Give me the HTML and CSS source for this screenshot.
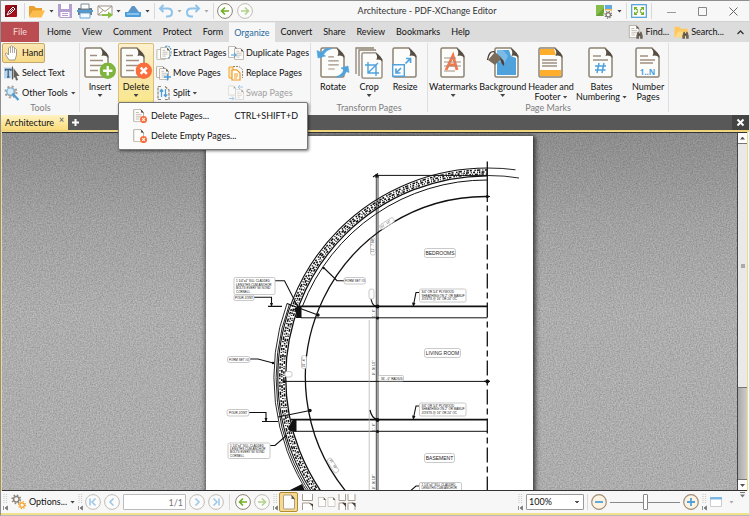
FILE: index.html
```html
<!DOCTYPE html>
<html lang="en">
<head>
<meta charset="utf-8">
<title>Architecture - PDF-XChange Editor</title>
<link rel="stylesheet" href="styles.css">
</head>
<body>
<svg class="defs" aria-hidden="true">
  <defs>
    <symbol id="page" viewBox="0 0 25 31">
      <path d="M2.500 1H17L24 9V28.500Q24 30 22.500 30H2.500Q1 30 1 28.500V2.500Q1 1 2.500 1Z" fill="#fcfcfb" stroke="#8d8272" stroke-width="1.500"/>
      <path d="M16.500 1Q19.500 5 17.500 9Q21 7.500 24.500 11Q24 5 16.500 1Z" fill="#574e43"/>
    </symbol>
    <symbol id="lines" viewBox="0 0 25 31">
      <path d="M6 8.500H13M6 13.500H19M6 18.500H19M6 23.500H14" stroke="#a08f80" stroke-width="1.400"/>
    </symbol>
    <symbol id="plus" viewBox="0 0 16 16">
      <circle cx="8" cy="8" r="8" fill="#7fb53c"/>
      <path d="M8 3.500V12.500M3.500 8H12.500" stroke="#fff" stroke-width="2.200"/>
    </symbol>
    <symbol id="cross" viewBox="0 0 16 16">
      <circle cx="8" cy="8" r="8" fill="#fb6e3c"/>
      <path d="M5 5L11 11M11 5L5 11" stroke="#fff" stroke-width="2.400"/>
    </symbol>
    <symbol id="gear" viewBox="0 0 14 14">
      <circle cx="7" cy="7" r="3.600" fill="none" stroke="currentColor" stroke-width="2"/>
      <circle cx="7" cy="7" r="5.500" fill="none" stroke="currentColor" stroke-width="2" stroke-dasharray="2 2.320"/>
    </symbol>
    <symbol id="binoc" viewBox="0 0 10 10">
      <path d="M1 9.500V6L2.500 1H4.300V9.500ZM5.700 9.500V1H7.500L9 6V9.500Z" fill="#6d6258"/>
      <path d="M4 3H6V6H4Z" fill="#4a4038"/>
    </symbol>
    <symbol id="grip" viewBox="0 0 5 18">
      <path d="M1 1V11M3.500 1V11" stroke="#ccc" stroke-width="1.200" stroke-dasharray="1 1"/>
      <path d="M.5 13V17M4.500 13V17L2 15Z" stroke="#777" stroke-width=".8" fill="#777"/>
    </symbol>
  </defs>
</svg>

<div class="app">
  <header class="titlebar">
    <div class="quick">
      <svg class="i-app" viewBox="0 0 12 12"><rect width="12" height="12" rx="1" fill="#a5121c"/><path d="M0 8L8 0H12V3L3 12H0Z" fill="#7d0c14"/><path d="M2 10L4 6L8 2L10 4L6 8Z" fill="none" stroke="#fff" stroke-width="1"/><path d="M5 7L8 4" stroke="#fff"/></svg>
      <i class="sep"></i>
      <button class="ib" aria-label="Open"><svg class="i18" viewBox="0 0 18 16"><path d="M1 14V3H6L8 5H14V8H5Z" fill="#eaa02c"/><path d="M1 14.500L5 7.500H17L13.500 14.500Z" fill="#fdbd4c"/></svg></button>
      <i class="dd"></i>
      <button class="ib" aria-label="Save"><svg class="i16" viewBox="0 0 16 16"><path d="M1 1H15V15H3L1 13Z" fill="#b49fd0"/><path d="M4 1H12V6H4Z" fill="#fff"/><path d="M3.500 9H12.500V14H3.500Z" fill="#fff"/><path d="M5 10.500H11M5 12.500H11" stroke="#b49fd0"/></svg></button>
      <button class="ib" aria-label="Print"><svg class="i16" viewBox="0 0 16 16"><path d="M1 5H15V12H1Z" fill="#6e7d88"/><path d="M4 1H12V6H4Z" fill="#fff" stroke="#7c8a94"/><path d="M3 10H13V15H3Z" fill="#f4fafe" stroke="#67a9d9"/><path d="M0 7H16V9H0Z" fill="#4c9dd6"/></svg></button>
      <button class="ib" aria-label="Mail"><svg class="i16" viewBox="0 0 16 16"><path d="M1 3H15V12H1Z" fill="#fff" stroke="#9d9385"/><path d="M1 3L8 8.500L15 3M1 12L6 7.500" fill="none" stroke="#9d9385"/><path d="M5 11H11V8.500L16 12L11 15.500V13H5Z" fill="#8abf45"/></svg></button>
      <i class="dd"></i>
      <button class="ib" aria-label="Scan"><svg class="i18" viewBox="0 0 18 16"><path d="M4 9L8 3H10.500L15 9Z" fill="#5b95c8"/><path d="M1 9H17V13Q17 14 16 14H2Q1 14 1 13Z" fill="#4b9ddb"/><path d="M3 11H15" stroke="#cde6f7" stroke-width="1"/></svg></button>
      <i class="dd"></i><i class="sep"></i>
      <button class="ib" aria-label="Undo"><svg class="i16" viewBox="0 0 16 16"><path d="M5.500 2L2 5.500L5.500 9M2 5.500H9.500Q14 5.500 14 9.500T9.500 13.500H8" fill="none" stroke="#8fc3ea" stroke-width="2"/></svg></button>
      <i class="dd faint"></i>
      <button class="ib" aria-label="Redo"><svg class="i16" viewBox="0 0 16 16"><path d="M10.500 2L14 5.500L10.500 9M14 5.500H6.500Q2 5.500 2 9.500T6.500 13.500H8" fill="none" stroke="#8fc3ea" stroke-width="2"/></svg></button>
      <i class="dd faint"></i><i class="sep"></i>
      <button class="ib" aria-label="Back"><svg class="i16" viewBox="0 0 16 16"><circle cx="8" cy="8" r="7.400" fill="#fff" stroke="#8c8273" stroke-width="1"/><path d="M12 8H5M8 4.500L4.500 8L8 11.500" fill="none" stroke="#72b026" stroke-width="1.700"/></svg></button>
      <button class="ib" aria-label="Forward"><svg class="i16 dim" viewBox="0 0 16 16"><circle cx="8" cy="8" r="7.400" fill="#fff" stroke="#8c8273" stroke-width="1"/><path d="M4 8H11M8 4.500L11.500 8L8 11.500" fill="none" stroke="#72b026" stroke-width="1.700"/></svg></button>
    </div>
    <h1>Architecture - PDF-XChange Editor</h1>
    <div class="winctl">
      <button class="ib" aria-label="Customize"><svg class="i18" viewBox="0 0 18 16"><path d="M1 2H9V13H1Z" fill="#87bd4b"/><path d="M1 13L9 5V13Z" fill="#69a23a"/><path d="M10 2H17V6H10Z" fill="#61a9e0"/><path d="M10 6H17V9H10Z" fill="#f4b94e"/><circle cx="13" cy="11.500" r="4.500" fill="#f7f7f7"/><use href="#gear" x="9" y="7.500" width="8.500" height="8.500" color="#7b746b"/></svg></button>
      <i class="dd"></i><i class="sep"></i>
      <button class="ib" aria-label="Full screen"><svg class="i16" viewBox="0 0 16 16"><rect x=".7" y="1.700" width="14.600" height="12.600" fill="#fff" stroke="#4c9dd6" stroke-width="1.200"/><path d="M3 4H6.500L3 7.500ZM13 4H9.500L13 7.500ZM3 12H6.500L3 8.500ZM13 12H9.500L13 8.500Z" fill="#72b026"/><path d="M4 5L7 7.500M12 5L9 7.500M4 11L7 8.500M12 11L9 8.500" stroke="#72b026" stroke-width="1.300"/></svg></button>
      <i class="sep"></i>
      <button class="win" aria-label="Minimize"><svg class="i9" viewBox="0 0 9 9"><path d="M0 5.500H9" stroke="#999"/></svg></button>
      <button class="win" aria-label="Maximize"><svg class="i9" viewBox="0 0 9 9"><path d="M.5 .5H8.500V8.500H.5Z" fill="none" stroke="#888"/></svg></button>
      <button class="win" aria-label="Close window"><svg class="i9" viewBox="0 0 9 9"><path d="M.5 .5L8.500 8.500M8.500 .5L.5 8.500" stroke="#666"/></svg></button>
    </div>
  </header>

  <nav class="tabs">
    <button class="file">File</button>
    <button>Home</button><button>View</button><button>Comment</button><button>Protect</button><button>Form</button>
    <button class="on">Organize</button>
    <button>Convert</button><button>Share</button><button>Review</button><button>Bookmarks</button><button>Help</button>
    <div class="find">
      <button><svg class="i18" viewBox="0 0 18 17"><use href="#page" x="1" y="1" width="12" height="14"/><use href="#lines" x="1" y="1" width="12" height="14"/><use href="#binoc" x="8.500" y="7.500" width="8.500" height="8.500"/></svg>Find...</button>
      <button><svg class="i18" viewBox="0 0 18 17"><path d="M1 14V3H6L8 5H15V14Z" fill="#ffc75c"/><path d="M1 14L5 8H17L14 14Z" fill="#ffda84"/><use href="#binoc" x="8.500" y="7.500" width="8.500" height="8.500"/></svg>Search...</button>
      <button class="collapse" aria-label="Collapse ribbon"><svg class="i9" viewBox="0 0 9 9"><path d="M1.500 6L4.500 3L7.500 6" fill="none" stroke="#333" stroke-width="1.300"/></svg></button>
    </div>
  </nav>

  <section class="ribbon">
    <div class="group tools">
      <div class="col">
        <button class="row active"><svg class="i16" viewBox="0 0 16 16"><path d="M5 15L1.500 9.500Q1 8 2.500 8L4.500 10V3Q5.500 1.500 6.500 3V1.500Q7.500 0 8.500 1.500V2.500Q9.500 1 10.500 2.500V4Q11.500 3 12.500 4.500V10L11 15Z" fill="#fff" stroke="#8d8678" stroke-width=".8"/><path d="M6.500 3V8M8.500 2V8M10.500 4V8" stroke="#8d8678" stroke-width=".7"/></svg>Hand</button>
        <button class="row"><svg class="i16" viewBox="0 0 16 16"><path d="M0 2.500H8V13.500H0Z" fill="#b9d6ee"/><path d="M1.500 6V4.500H7V6M4.200 4.500V12M3 12H5.500" fill="none" stroke="#44617c" stroke-width="1.300"/><path d="M8.500 1.500V14.500" stroke="#5b5b5b"/><path d="M9.500 3L15.500 11H12.500L14 15L12 15.500L11 12L9.500 13.500Z" fill="#65605a"/></svg>Select Text</button>
        <button class="row"><svg class="i16" viewBox="0 0 16 16"><use href="#gear" x="0" y="0" width="14" height="14" color="#a39c92"/><circle cx="6.500" cy="6.500" r="3.500" fill="#d6eaf8" stroke="#7fb9e2" stroke-width="1.200"/><path d="M8.500 8.500L14.500 15" stroke="#4c9dd6" stroke-width="2.200"/></svg>Other Tools <i class="dd"></i></button>
      </div>
      <h2>Tools</h2>
    </div>

    <div class="group pages">
      <div class="set">
        <button class="big"><svg viewBox="0 0 34 34"><use href="#page" x="1" y="1" width="25" height="31"/><use href="#lines" x="1" y="1" width="25" height="31"/><use href="#plus" x="16.500" y="16.500" width="16.500" height="16.500"/></svg>Insert<i class="tri"></i></button>
        <div class="drop">
          <button class="big active"><svg viewBox="0 0 34 34"><use href="#page" x="1" y="1" width="25" height="31"/><use href="#lines" x="1" y="1" width="25" height="31"/><use href="#cross" x="16.500" y="16.500" width="16.500" height="16.500"/></svg>Delete<i class="tri"></i></button>
          <div class="menu">
            <button><svg class="i18" viewBox="0 0 16 18"><use href="#page" x="0" y="1" width="13" height="15"/><use href="#lines" x="0" y="1" width="13" height="15"/><use href="#cross" x="8" y="9" width="8" height="8"/></svg><span>Delete Pages...</span><kbd>CTRL+SHIFT+D</kbd></button>
            <button><svg class="i18" viewBox="0 0 16 18"><use href="#page" x="0" y="1" width="13" height="15"/><use href="#cross" x="8" y="9" width="8" height="8"/></svg><span>Delete Empty Pages...</span></button>
          </div>
        </div>
        <div class="col c1">
          <button class="row"><svg class="i16" viewBox="0 0 16 16"><use href="#page" x="0" y="4" width="10" height="11"/><use href="#page" x="4" y="2" width="10" height="12"/><path d="M9 1.500Q15 0 15 6.500T12 13" fill="none" stroke="#4c9dd6" stroke-width="1.200" stroke-dasharray="2 1"/><use href="#lines" x="4" y="2" width="10" height="12"/></svg>Extract Pages</button>
          <button class="row"><svg class="i16" viewBox="0 0 16 16"><use href="#page" x="0" y="1" width="10" height="12"/><use href="#page" x="3" y="3" width="10" height="12"/><use href="#lines" x="3" y="3" width="10" height="12"/><path d="M11.500 8.500V15.500M8 12H15" stroke="#4c9dd6" stroke-width="1.300"/></svg>Move Pages</button>
          <button class="row"><svg class="i16" viewBox="0 0 16 16"><path d="M5 1.500H2V14.500H5M9 1.500L13 5V14.500H9" fill="none" stroke="#8d8272" stroke-width="1.200" stroke-dasharray="3 1"/><path d="M5.500 12V5M3.800 6.500L5.500 4.500L7.200 6.500M9.500 4V11M7.800 9.500L9.500 11.500L11.200 9.500" fill="none" stroke="#4c9dd6" stroke-width="1.200"/></svg>Split <i class="dd"></i></button>
        </div>
        <div class="col">
          <button class="row"><svg class="i16" viewBox="0 0 16 16"><use href="#page" x="0" y="1" width="10" height="12"/><use href="#page" x="6" y="3" width="10" height="12"/><use href="#lines" x="6" y="3" width="10" height="12"/><path d="M3 10H8M6 8L8.500 10L6 12" fill="none" stroke="#4c9dd6"/></svg>Duplicate Pages</button>
          <button class="row"><svg class="i16" viewBox="0 0 16 16"><path d="M5 1.500H11L14.500 4.500V13" fill="none" stroke="#8d8272" stroke-dasharray="2 1"/><path d="M1 2H5V5H9V13H1Z" fill="#ffe9c2" stroke="#eda52e"/><path d="M4 5H9L12 8V15H4Z" fill="#fff" stroke="#f09a1f" stroke-width="1.200"/><path d="M6 9H10M6 11H10M6 13H9" stroke="#f09a1f"/></svg>Replace Pages</button>
          <button class="row" disabled><svg class="i16 dim" viewBox="0 0 16 16"><use href="#page" x="0" y="0" width="8" height="11"/><use href="#page" x="7" y="4" width="9" height="11"/><use href="#lines" x="7" y="4" width="9" height="11"/><path d="M1 13.500H6M4 11.500L6 13.500L4 15.500M15 2H10M12 0L10 2L12 4" fill="none" stroke="#4c9dd6"/></svg>Swap Pages</button>
        </div>
      </div>
    </div>

    <div class="group">
      <div class="set">
        <button class="big"><svg viewBox="0 0 34 34"><use href="#page" x="4" y="1" width="25" height="31"/><use href="#lines" x="5" y="4" width="25" height="25"/><path d="M16 2.500Q9 1 5.500 6.500L1 4.500L2 12L9.500 10L7.500 8.500Q10 4 16 2.500ZM20 31Q28 31.500 30.500 25.500L33 26.500L32 20L25 22L28 24Q26 29 20 31Z" fill="#4fa2dc" stroke="#4fa2dc" stroke-width=".6"/></svg>Rotate</button>
        <button class="big"><svg viewBox="0 0 34 34"><path d="M4 28V2H22M7 30V4H24" fill="none" stroke="#8d8272" stroke-width="1.300"/><use href="#page" x="9" y="6" width="22" height="27"/><path d="M16 16V27H27M13 19H24V30M16 27L26 17" fill="none" stroke="#4fa2dc" stroke-width="1.400"/></svg>Crop<i class="tri"></i></button>
        <button class="big"><svg viewBox="0 0 34 34"><use href="#page" x="4" y="1" width="25" height="31"/><path d="M4.700 18.700H16.300V30.300H4.700Z" fill="#fff" stroke="#4fa2dc" stroke-width="1.400"/><path d="M13 22L8.500 26.500M8 22.500V27H12.500M17.500 17.500L22 13M18 12.500H22.500V17" fill="none" stroke="#4fa2dc" stroke-width="1.700"/></svg>Resize</button>
      </div>
      <h2>Transform Pages</h2>
    </div>

    <div class="group marks">
      <div class="set">
        <button class="big"><svg viewBox="0 0 34 34"><use href="#page" x="4" y="1" width="25" height="31"/><path d="M10 24L17 9.500L21 24M12 19H20" fill="none" stroke="#fb7646" stroke-width="2.800"/><path d="M8 12H20M8 16H25M8 20H25M8 25H19" stroke="#a08f80" stroke-width="1.100"/></svg>Watermarks<i class="tri"></i></button>
        <button class="big"><svg viewBox="0 0 34 34"><use href="#page" x="8" y="1" width="25" height="31"/><path d="M11 4H23L25 10L30 12V29H11Z" fill="#4fa2dc"/><path d="M11 4H17L22 10L18 18L11 15Z" fill="#7bbbe8"/><path d="M2 14L9 6L16 12L9 19Z" fill="#7a6c5b"/><path d="M1.500 14Q3 4 9 6" fill="none" stroke="#4a4038" stroke-width="1.400"/><path d="M14 12Q19 13 18 20Q15 18 14 12Z" fill="#4a4038"/></svg>Background<i class="tri"></i></button>
        <button class="big"><svg viewBox="0 0 34 34"><use href="#page" x="4" y="1" width="25" height="31"/><path d="M6 3H20L22 9H6ZM6 24H27V30H6Z" fill="#ffad2c"/><path d="M8 14H23M8 17H23M8 20H23" stroke="#a08f80" stroke-width="1.300"/></svg>Header and<span>Footer<i class="tri"></i></span></button>
        <button class="big"><svg viewBox="0 0 34 34"><use href="#page" x="4" y="1" width="25" height="31"/><path d="M9 10H17M9 14H24" stroke="#a08f80" stroke-width="1.300"/><path d="M15 17L13 27M20 17L18 27M11 20H22M11 24H21.500" stroke="#4fa2dc" stroke-width="1.500"/></svg>Bates<span>Numbering<i class="tri"></i></span></button>
        <button class="big"><svg viewBox="0 0 34 34"><use href="#page" x="4" y="1" width="25" height="31"/><path d="M9 10H17M9 14H24M9 17H22" stroke="#a08f80" stroke-width="1.300"/><text x="16.500" y="28.500" text-anchor="middle" class="num">1..N</text></svg>Number<span>Pages</span></button>
      </div>
      <h2>Page Marks</h2>
    </div>
  </section>

  <div class="doctabs">
    <button class="doc">Architecture <span>×</span></button>
    <button class="new" aria-label="New tab"><svg class="i9" viewBox="0 0 9 9"><path d="M4.500 1V8M1 4.500H8" stroke="#fff" stroke-width="2"/></svg></button>
    <button class="closeall" aria-label="Close document"><svg class="i9" viewBox="0 0 9 9"><path d="M1.500 1.500L7.500 7.500M7.500 1.500L1.500 7.500" stroke="#fff" stroke-width="2"/></svg></button>
  </div>

  <main class="view">
    <div class="canvas">
      <svg class="grain" aria-hidden="true"><filter id="noise"><feTurbulence type="fractalNoise" baseFrequency=".7" numOctaves="2" seed="4"/><feColorMatrix values="0 0 0 0 0  0 0 0 0 0  0 0 0 0 0  .350 0 0 0 -.1"/></filter><rect width="100%" height="100%" filter="url(#noise)"/></svg>
      <div class="sheet">
        <svg viewBox="206 136 327 355" class="plan" role="img" aria-label="Architectural plan">
          <g fill="none" stroke="#111">
            <path d="M487.300 172A205.500 205.500 0 0 0 487.300 583" stroke="#fff" stroke-width="8"/>
            <path d="M487.300 170A207.500 207.500 0 0 0 487.300 585" stroke-width="1.500" stroke-dasharray="2.500 1.500 1 2 3.500 1 1.500 2.500 2 1"/>
            <path d="M487.300 172A205.500 205.500 0 0 0 487.300 583" stroke-width="1.600" stroke-dasharray="1 1.800 3 1.200 1.500 1 .8 2 2 1.300"/>
            <path d="M487.300 174A203.500 203.500 0 0 0 487.300 581" stroke-width="1.500" stroke-dasharray="1.500 2 2.500 1 1 1.500 3 2 .8 1"/>
            <path d="M487.300 168A209.500 209.500 0 0 0 487.300 587" stroke-width="1.100"/>
            <path d="M487.300 175.800A201.500 201.500 0 0 0 487.300 579" stroke-width="1.300"/>
            <path d="M487.300 180A197.500 197.500 0 0 0 302.500 306" stroke-width="1"/>
            <path d="M287 303.500A213.500 213.500 0 0 0 310 496M289.500 304A211.500 211.500 0 0 0 312 496" stroke-width=".9"/>
            <path d="M487.300 196.500A180.800 180.800 0 0 0 346 491.500" stroke-width="1.300"/>
            <path d="M487.300 168Q503 168 515.500 169.800M487.300 175.500Q505 175.500 519 178" stroke-width=".9"/>
            <path d="M375 175.400H487.300M283 381.400H487.300M301 317.800H487.300M294 431.300H487.300" stroke-width="1"/>
            <path d="M299 306.300H487.300M291 419.600H487.300" stroke-width="1.700"/>
            <path d="M376.300 175V495M378 175V495" stroke-width=".8"/>
            <path d="M369.200 320V495" stroke="#aaa" stroke-width=".7"/>
            <path d="M487.300 161.500V202" stroke-width="1.300"/>
            <path d="M487.300 205.500V495" stroke-width="1.300" stroke-dasharray="6 4 15 4"/>
            <path d="M287 303.500L299 308L318 315M278 417L310 410.500M373 177L378 173.500M375 177H379M374 306L378.500 306M484 381.400H490M484 196.500H490" stroke-width="1.100"/>
            <path d="M275 280.700H284.500L298 307M254 297.300H271.500V306M268 306.400H282M345 280.700H337L324 268M250 359H258L273 363M249 412.500H266V421M262 421.500H278M270 445.500H275L287 435M419 292.500H416L413.500 305M419 406H416L413.500 418M419 486H416L408 493" stroke-width="1.100"/>
            <path d="M370.500 295Q371.500 306 376 306M370 410Q372 419 377 419" stroke-width="1.200"/>
          </g>
          <g fill="#111">
            <path d="M297 306H301.500V318H296ZM293 419.500H296.500V431.500H290L288 428ZM294 309L297 307V315ZM412 302.500L415.500 303L413.200 307ZM412 415.500L415.500 416L413.200 420ZM286 492L302 484L306 493ZM270 303H273L271.500 307ZM264.500 418H267.500L266 422Z"/>
            <circle cx="323.500" cy="268" r="1.200"/><circle cx="318" cy="315" r="1.700"/><circle cx="310" cy="410.500" r="1.700"/><circle cx="376.800" cy="175.500" r="1.500"/><circle cx="377.500" cy="306.500" r="1.900"/><circle cx="377.500" cy="318" r="1.500"/><circle cx="377.500" cy="420" r="1.900"/><circle cx="377.500" cy="431.500" r="1.500"/><circle cx="487.300" cy="196.500" r="1.600"/><circle cx="487.300" cy="381.400" r="1.900"/><circle cx="284" cy="381.400" r="1.500"/><circle cx="273" cy="363" r="1.200"/>
          </g>
          <g fill="#fff" stroke="#bbb" stroke-width=".8">
            <rect x="424.500" y="248.500" width="31" height="9" rx="2"/><rect x="424.500" y="348.500" width="36" height="9" rx="2"/><rect x="424.500" y="453.500" width="30" height="9" rx="2"/>
            <rect x="234" y="277.500" width="41" height="17" rx="1.500"/><rect x="234" y="295" width="20" height="5.500" rx="1.500"/><rect x="344" y="277.500" width="21.500" height="6.500" rx="2"/>
            <rect x="227.500" y="356.500" width="22.500" height="6" rx="2"/><rect x="227" y="409.500" width="22" height="6.500" rx="2"/><rect x="228" y="443" width="42" height="15.500" rx="1.500"/>
            <rect x="419.500" y="289" width="46.500" height="13" rx="1.500"/><rect x="419.500" y="403" width="46.500" height="13" rx="1.500"/><rect x="419.500" y="482.500" width="42" height="14" rx="1.500"/>
            <rect x="378.500" y="375.500" width="25" height="5.500" rx="1"/><rect x="370.500" y="238" width="5" height="17" rx="2"/><rect x="369" y="289" width="5" height="10" rx="2"/><rect x="301.500" y="355.500" width="5" height="13" rx="2"/><rect x="285" y="371.500" width="7" height="5.500" rx="2"/>
            <rect x="379" y="221" width="16" height="5" rx="2" transform="rotate(-33 387 223.500)"/><rect x="325" y="463" width="16" height="5" rx="2" transform="rotate(58 333 465.500)"/>
          </g>
          <g class="room"><text x="440" y="255">BEDROOMS</text><text x="442.500" y="355">LIVING ROOM</text><text x="439.500" y="460">BASEMENT</text></g>
          <g class="note">
            <text x="236" y="281.700">1 1/4"x4" SILL CLADDED</text><text x="236" y="285.700">LENGTHS CUM ANCHOR</text><text x="236" y="289.200">BOLTS EVERY W/ SOND</text><text x="236" y="292.700">CORNELL</text>
            <text x="235" y="298.800">POUR JOINT</text><text x="345" y="282">FORM SET #3</text><text x="229" y="360.500">FORM SET #4</text><text x="229" y="413.800">POUR JOINT</text>
            <text x="230" y="446.700">1 1/4"x4" SILL CLADDED</text><text x="230" y="449.900">LENGTHS CUM ANCHOR</text><text x="230" y="453.300">BOLTS EVERY W/ SOND</text><text x="230" y="456.700">CORNELL</text>
            <text x="421.500" y="292.500">3/4" OR 5/4" PLYWOOD</text><text x="421.500" y="296.500">SHEATHING ON 2" OR MANUF</text><text x="421.500" y="300">JOISTS @ 16" OR 24" OC</text>
            <text x="421.500" y="406.500">3/4" OR 5/4" PLYWOOD</text><text x="421.500" y="410.300">SHEATHING ON 2" OR MANUF</text><text x="421.500" y="413.800">JOISTS @ 16" OR 24" OC</text>
            <text x="421.500" y="485.700">1 1/4"x4" SILL CLADDED</text><text x="421.500" y="489.200">LENGTHS CUM ANCHOR</text>
            <text x="381" y="379.700">36' - 0" RADIUS</text>
            <text transform="translate(374.200 252) rotate(-90)">11' - 7 3/8"</text><text transform="translate(374.700 375) rotate(-90)">8' - 10 1/2"</text><text transform="translate(374.700 489) rotate(-90)">8' - 10 1/8"</text><text transform="translate(374.700 317) rotate(-90)">1' - 0"</text><text transform="translate(374.700 431) rotate(-90)">1' - 0"</text><text transform="translate(305 367) rotate(-90)">31' - 0"</text><text transform="translate(381.500 228) rotate(-33)">31' - 10"</text><text transform="translate(329.500 460) rotate(58)">31' - 10"</text>
          </g>
        </svg>
      </div>
    </div>
    <div class="scroll" aria-hidden="true"><i class="up"></i><i class="thumb"></i><i class="rest"></i><i class="down"></i></div>
  </main>

  <footer class="status">
    <svg class="grip"><use href="#grip"/></svg>
    <button class="opt"><svg class="i18" viewBox="0 0 18 18"><use href="#gear" x="0" y="0" width="12" height="12" color="#8d857a"/><use href="#gear" x="7.500" y="7.500" width="10" height="10" color="#f6a62c"/></svg>Options... <i class="dd"></i></button>
    <svg class="grip"><use href="#grip"/></svg>
    <div class="pager">
      <button class="ib" aria-label="First page"><svg class="i16 dim" viewBox="0 0 16 16"><circle cx="8" cy="8" r="7.400" fill="#fff" stroke="#8c8273"/><path d="M5 4.500V11.500M10.500 4.500L7 8L10.500 11.500" fill="none" stroke="#3f97dc" stroke-width="1.500"/></svg></button>
      <button class="ib" aria-label="Previous page"><svg class="i16 dim" viewBox="0 0 16 16"><circle cx="8" cy="8" r="7.400" fill="#fff" stroke="#8c8273"/><path d="M9.500 4.500L6 8L9.500 11.500" fill="none" stroke="#3f97dc" stroke-width="1.500"/></svg></button>
      <input class="pageno" type="text" value="1/1" aria-label="Page">
      <button class="ib" aria-label="Next page"><svg class="i16 dim" viewBox="0 0 16 16"><circle cx="8" cy="8" r="7.400" fill="#fff" stroke="#8c8273"/><path d="M6.500 4.500L10 8L6.500 11.500" fill="none" stroke="#3f97dc" stroke-width="1.500"/></svg></button>
      <button class="ib" aria-label="Last page"><svg class="i16 dim" viewBox="0 0 16 16"><circle cx="8" cy="8" r="7.400" fill="#fff" stroke="#8c8273"/><path d="M11 4.500V11.500M5.500 4.500L9 8L5.500 11.500" fill="none" stroke="#3f97dc" stroke-width="1.500"/></svg></button>
      <i class="sep"></i>
      <button class="ib" aria-label="Previous view"><svg class="i16" viewBox="0 0 16 16"><circle cx="8" cy="8" r="7.400" fill="#fff" stroke="#8c8273"/><path d="M12 8H5M8 4.500L4.500 8L8 11.500" fill="none" stroke="#72b026" stroke-width="1.700"/></svg></button>
      <button class="ib" aria-label="Next view"><svg class="i16 dim" viewBox="0 0 16 16"><circle cx="8" cy="8" r="7.400" fill="#fff" stroke="#8c8273"/><path d="M4 8H11M8 4.500L11.500 8L8 11.500" fill="none" stroke="#72b026" stroke-width="1.700"/></svg></button>
    </div>
    <svg class="grip"><use href="#grip"/></svg>
    <div class="modes">
      <button class="ib active" aria-label="Single page"><svg class="i16" viewBox="0 0 16 16"><use href="#page" x="2" y="0" width="12" height="16"/></svg></button>
      <button class="ib" aria-label="Continuous"><svg class="i16" viewBox="0 0 16 16"><path d="M2.500 0V6.500H12.500V0M2.500 16V9H10L12.500 11.500V16" fill="#fff" stroke="#a79c8d"/><path d="M9 9L13 13V10Z" fill="#4a4038"/></svg></button>
      <button class="ib" aria-label="Two pages"><svg class="i18" viewBox="0 0 18 16"><use href="#page" x="0" y="3" width="8" height="10"/><use href="#page" x="9.500" y="3" width="8" height="10"/></svg></button>
      <button class="ib" aria-label="Two pages continuous"><svg class="i18" viewBox="0 0 18 16"><path d="M1 0V6.500H7.500V0M10 0V6.500H17V0M1 16V9H6L7.500 11V16M10 16V9H15L17 11V16" fill="#fff" stroke="#a79c8d"/><path d="M4 8.500L8 13V9ZM13.500 8.500L17.500 13V9Z" fill="#4a4038"/></svg></button>
    </div>
    <div class="zoom">
      <svg class="grip"><use href="#grip"/></svg>
      <select aria-label="Zoom"><option>100%</option></select>
      <i class="sep"></i>
      <button class="ib" aria-label="Zoom out"><svg class="i16" viewBox="0 0 16 16"><circle cx="8" cy="8" r="7.300" fill="#fdf3e2" stroke="#a08c76" stroke-width="1.200"/><path d="M4 8H12" stroke="#4fa2dc" stroke-width="1.800"/></svg></button>
      <input type="range" min="0" max="100" value="50" aria-label="Zoom level">
      <button class="ib" aria-label="Zoom in"><svg class="i16" viewBox="0 0 16 16"><circle cx="8" cy="8" r="7.300" fill="#fdf3e2" stroke="#a08c76" stroke-width="1.200"/><path d="M4 8H12M8 4V12" stroke="#4fa2dc" stroke-width="1.800"/></svg></button>
      <svg class="grip"><use href="#grip"/></svg>
      <button class="ib" aria-label="Layout"><svg class="i12" viewBox="0 0 12 12"><path d="M.5 2H11.500V10.500H.5Z" fill="#fff" stroke="#ccc"/><path d="M0 1H12V3.500H0Z" fill="#7db8e4"/></svg></button>
      <i class="dd faint last"></i>
    </div>
    <button class="more" aria-label="More"><svg class="i9" viewBox="0 0 9 9"><path d="M2 1.500H7" stroke="#777"/><path d="M2 3.500H7L4.500 6.500Z" fill="#777"/></svg></button>
  </footer>
</div>
</body>
</html>
```
FILE: styles.css
```css
* { box-sizing: border-box; }

html, body { height: 100%; margin: 0; }

body {
  font: 9px/10px Lato, "Open Sans", sans-serif;
  color: #111;
  background: #f7f7f7;
}

button, input, select { font: inherit; color: inherit; }

button {
  display: flex;
  align-items: center;
  margin: 0;
  padding: 0;
  border: 0;
  background: none;
  white-space: nowrap;
}

svg { display: block; flex: none; }
.defs { position: absolute; width: 0; height: 0; }
.i9 { width: 9px; height: 9px; }
.i12 { width: 12px; height: 12px; }
.i16 { width: 16px; height: 16px; }
.i18 { width: 18px; height: 16px; }
.i-app { width: 12px; height: 12px; }
.dim { opacity: .5; }

.app {
  display: flex;
  flex-direction: column;
  height: 100%;
  border: 1px solid #8f8f8f;
  border-right-color: #d9d9d9;
  border-bottom-color: #b8b8b8;
}

.sep { flex: none; width: 1px; height: 16px; background: #d8d8d8; }
.dd, .tri {
  flex: none;
  display: inline-block;
  width: 5px;
  height: 3px;
  background: #444;
  clip-path: polygon(0 0, 100% 0, 50% 100%);
}
.dd.faint { background: #aaa; }

/* Title bar */
.titlebar { display: flex; align-items: center; height: 20px; }
.quick { display: flex; align-items: center; gap: 3px; padding: 0 6px 0 4px; }
.quick .i-app { margin-right: 3px; }
.quick .sep { margin-left: 1px; }
.quick .ib + .ib { margin-left: 1px; }
.titlebar h1 { flex: 1; margin: 0; font-size: 9px; font-weight: 400; text-align: center; color: #333; }
.winctl { display: flex; align-items: center; gap: 4px; padding-right: 11px; }
.win { margin-left: 11px; }
.win + .win { margin-left: 18px; }

/* Ribbon tabs */
.tabs { display: flex; gap: 1px; height: 21px; background: #dcdcdc; border-top: 1px solid #d2d2d2; }
.tabs > button { padding: 0 5px; }
.tabs .file { justify-content: center; width: 38px; margin-right: 2px; background: #ba4d51; color: #f5d9d9; }
.tabs .on { background: #f7f7f7; color: #2a6a9e; border-top: 1px solid #ececec; }
.find { display: flex; gap: 4px; margin-left: auto; padding-right: 4px; }
.find .collapse { margin-left: 8px; }

/* Ribbon */
.ribbon { display: flex; height: 73px; padding-top: 1px; background: #f7f7f7; }
.group { display: flex; flex-direction: column; border-right: 1px solid #dedede; padding: 0 4px; margin-bottom: 3px; }
.group h2 { margin: auto 0 0; height: 10px; font-size: 9px; font-weight: 400; text-align: center; color: #808080; }
.tools { padding: 0 0 0 1px; width: 79px; }
.set { display: flex; }
.col { display: flex; flex-direction: column; align-items: flex-start; }
.col.c1 { width: 72px; }
.row { height: 20px; gap: 2px; padding: 0 0 0 1px; border: 1px solid transparent; }
.c1 .row { gap: 1px; }
.row .dd { margin-left: 1px; }
.row:disabled { color: #a0a0a0; }
.active { background: linear-gradient(#fbe7b2, #f8da86); border: 1px solid #c5a869; border-radius: 2px; }
.row.active { padding-right: 1px; }
.pages { padding: 0 0 0 2px; }

.big { flex-direction: column; justify-content: flex-start; min-width: 36px; height: 60px; padding: 3px 0 0; }
.big svg { width: 34px; height: 34px; margin-bottom: 2px; }
.big > .tri { margin-top: 2px; }
.big span { display: flex; align-items: center; gap: 2px; }
.big.active { background: linear-gradient(#fdf1cd, #f8e6a6 60%, #fae88c); border: 0; box-shadow: inset 0 0 0 1px #d9bd7c; }
.marks { padding: 0 1px; }
.marks .set { gap: 2px; }
.marks .big:last-child { min-width: 38px; }
.num { font: 700 8px "Open Sans", sans-serif; fill: #4fa2dc; }

/* Delete menu */
.drop { position: relative; }
.menu {
  position: absolute;
  z-index: 3;
  top: 59px;
  left: 0;
  width: 190px;
  padding: 3px 4px;
  background: #fbfbfb;
  border: 1px solid #777;
  border-radius: 2px;
  box-shadow: 1px 1px 3px #0008;
}
.menu button { width: 100%; height: 20px; padding-left: 8px; }
.menu span { margin-left: 2px; }
.menu kbd { margin-left: auto; padding-right: 5px; font: inherit; }

/* Document tabs */
.doctabs { display: flex; height: 17px; background: #585858; border-bottom: 2px solid #f0d272; }
.doc { gap: 5px; padding: 0 4px; background: linear-gradient(#fff3c4, #fadb7c); }
.doc span { color: #555; align-self: flex-start; }
.new { padding: 0 3px; }
.closeall { margin-left: auto; padding: 0 4px; background: #444; }

/* Page view */
.view { flex: 1; display: flex; min-height: 0; border: 1px solid #333; border-width: 1px 0; margin: 0 2px 0 1px; outline: 1px solid #efd98a; }
.canvas { position: relative; flex: 1; overflow: hidden; background: linear-gradient(#989898, #aeaeae 25%, #bbb 50%, #bbb); }
.grain { position: absolute; inset: 0; width: 100%; height: 100%; }
.sheet { position: relative; width: 327px; height: 100%; margin: 3px auto 0; background: #fff; box-shadow: 1px 1px 5px 1px #000b; }
.plan { width: 327px; height: 355px; }
.room { font: 5px "Liberation Sans", sans-serif; fill: #222; text-anchor: middle; }
.note { font: 3px "Liberation Sans", sans-serif; fill: #111; }
.scroll { display: flex; flex-direction: column; width: 10px; background: #fff; border-left: 1px solid #444; }
.scroll i { display: grid; place-items: center; }
.up, .down { flex: none; height: 10px; }
.up::before, .down::before { content: ""; width: 5px; height: 3px; background: #555; clip-path: polygon(50% 0, 100% 100%, 0 100%); }
.down::before { transform: scaleY(-1); }
.thumb { flex: 247; background: #e9e9e9; border: 1px solid #777; border-width: 1px 0; }
.thumb::before { content: ""; width: 4px; height: 4px; background: #aaa; }
.rest { flex: 92; background: linear-gradient(90deg, #a9a9a9, #ccc); border-bottom: 1px solid #777; }

/* Status bar */
.status { position: relative; z-index: 1; flex: none; display: flex; align-items: center; height: 24px; padding: 0 2px; background: #f7f7f7; border-bottom: 2px solid #f3e08a; }
.grip { width: 5px; height: 18px; }
.opt { gap: 1px; margin: 0 3px 0 2px; }
.opt .dd { margin-left: 2px; }
.pager { display: flex; align-items: center; gap: 3px; margin: 0 3px 0 2px; }
.pageno { width: 63px; height: 16px; padding: 0 2px; text-align: right; color: #777; border: 1px solid #bbb; border-radius: 1px; background: #fff; }
.pager .sep { margin: 0 2px; }
.modes { display: flex; align-items: center; gap: 2px; margin-left: 1px; }
.modes .active { width: 19px; height: 20px; justify-content: center; border-color: #b08b3c; background: #f7d98c; }
.zoom { display: flex; align-items: center; gap: 3px; margin-left: auto; }
.zoom select {
  width: 58px;
  height: 16px;
  padding: 0 2px;
  appearance: none;
  border: 1px solid #999;
  border-radius: 1px;
  background:
    linear-gradient(45deg, transparent 50%, #555 50%) no-repeat right 6px center / 3px 3px,
    linear-gradient(-45deg, transparent 50%, #555 50%) no-repeat right 3px center / 3px 3px,
    #fff;
}
.zoom input { appearance: none; width: 70px; height: 16px; margin: 0; background: linear-gradient(#888, #888) no-repeat center / 100% 1px; }
.zoom input::-webkit-slider-thumb { appearance: none; width: 5px; height: 16px; background: #fff; border: 1px solid #888; border-radius: 1px; }
.zoom .last { margin: 0 4px; }
.more { align-self: flex-start; }
```
